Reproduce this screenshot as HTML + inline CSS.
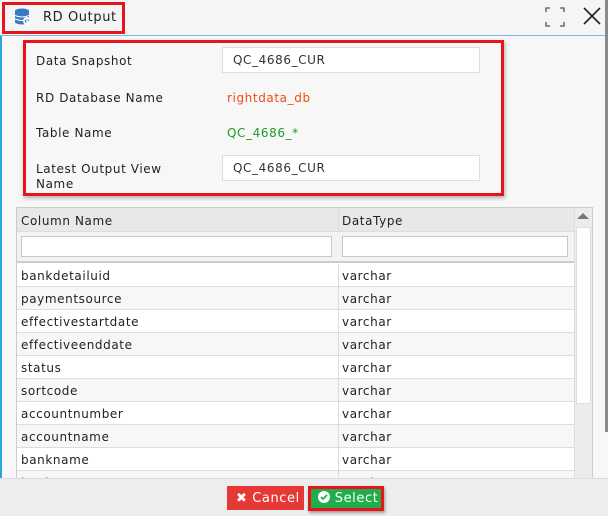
<!DOCTYPE html>
<html><head><style>
*{margin:0;padding:0;box-sizing:border-box}
body{width:608px;height:516px;overflow:hidden;background:#f7f7f7;font-family:"DejaVu Sans","Liberation Sans",sans-serif;font-size:12px;letter-spacing:0.6px;color:#222;position:relative}
.a{position:absolute}
.inp{position:absolute;background:#fff;border:1px solid #ddd;height:26px;padding-left:10px;line-height:25px;color:#333}
.row{position:absolute;left:17px;width:557px;height:23px;border-bottom:1px solid #ddd}
.row span{position:absolute;top:5px}
.row .c1{left:4px}.row .c2{left:325px}
.row:after{content:"";position:absolute;left:321px;top:0;bottom:0;border-left:1px solid #ddd}
</style></head><body>
<div class="a" style="left:0;top:0;width:608px;height:36px;background:#f5f5f5;border-bottom:1px solid #7fb6e0"></div>
<div class="a" style="left:0;top:36px;width:2px;height:442px;background:#2aa6de"></div>
<div class="a" style="left:605px;top:0;width:3px;height:432px;background:#8a8a8a"></div>
<div class="a" style="left:2px;top:2px;width:123px;height:32px;border:3px solid #e8141b"></div>
<svg class="a" style="left:14px;top:8px" width="18" height="18" viewBox="0 0 18 18"><ellipse cx="8" cy="3" rx="7" ry="2.5" fill="#3b78c0"/><rect x="1" y="3" width="14" height="11" fill="#3b78c0"/><ellipse cx="8" cy="14" rx="7" ry="2.5" fill="#3b78c0"/><path d="M1 7.5q7 3 14 0M1 11q7 3 14 0" stroke="#fff" fill="none"/><circle cx="13" cy="13" r="4" fill="#fff"/><path d="M11 13l1.5-1.5M11 13l1.5 1.5M15 13l-1.5-1.5" stroke="#3b78c0" stroke-width="1"/></svg>
<div class="a" style="left:43px;top:10px;font-size:13px">RD Output</div>
<svg class="a" style="left:545px;top:7px" width="20" height="20" viewBox="0 0 20 20" fill="none" stroke="#555" stroke-width="1.3"><path d="M1 5V1h4M15 1h4v4M19 15v4h-4M5 19H1v-4"/></svg>
<svg class="a" style="left:583px;top:7px" width="18" height="18" viewBox="0 0 18 18" stroke="#222" stroke-width="1.6"><path d="M1 1l16 16M17 1L1 17"/></svg>
<div class="a" style="left:23px;top:40px;width:481px;height:156px;border:3px solid #e8141b;box-shadow:1px 2px 4px rgba(0,0,0,.3)"></div>
<div class="a" style="left:36px;top:54px">Data Snapshot</div>
<div class="inp" style="left:222px;top:47px;width:258px">QC_4686_CUR</div>
<div class="a" style="left:36px;top:91px">RD Database Name</div>
<div class="a" style="left:227px;top:91px;color:#f04e13">rightdata_db</div>
<div class="a" style="left:36px;top:126px">Table Name</div>
<div class="a" style="left:227px;top:126px;color:#1e9a28">QC_4686_*</div>
<div class="a" style="left:36px;top:162px;line-height:15px">Latest Output View<br>Name</div>
<div class="inp" style="left:222px;top:155px;width:258px">QC_4686_CUR</div>
<div class="a" style="left:16px;top:207px;width:577px;height:272px;border:1px solid #ccc;background:#fff"></div>
<div class="a" style="left:17px;top:208px;width:557px;height:24px;background:#e8e8e8;border-bottom:1px solid #ddd"></div>
<div class="a" style="left:21px;top:214px">Column Name</div>
<div class="a" style="left:338px;top:208px;height:55px;border-left:1px solid #ddd"></div>
<div class="a" style="left:342px;top:214px">DataType</div>
<div class="a" style="left:17px;top:232px;width:557px;height:31px;background:#f3f3f3;border-bottom:2px solid #ccc"></div>
<div class="a" style="left:21px;top:236px;width:311px;height:21px;background:#fff;border:1px solid #c6c6c6"></div>
<div class="a" style="left:342px;top:236px;width:226px;height:21px;background:#fff;border:1px solid #c6c6c6"></div>
<div class="row" style="top:264px;background:#fff"><span class="c1">bankdetailuid</span><span class="c2">varchar</span></div>
<div class="row" style="top:287px;background:#f7f7f7"><span class="c1">paymentsource</span><span class="c2">varchar</span></div>
<div class="row" style="top:310px;background:#fff"><span class="c1">effectivestartdate</span><span class="c2">varchar</span></div>
<div class="row" style="top:333px;background:#f7f7f7"><span class="c1">effectiveenddate</span><span class="c2">varchar</span></div>
<div class="row" style="top:356px;background:#fff"><span class="c1">status</span><span class="c2">varchar</span></div>
<div class="row" style="top:379px;background:#f7f7f7"><span class="c1">sortcode</span><span class="c2">varchar</span></div>
<div class="row" style="top:402px;background:#fff"><span class="c1">accountnumber</span><span class="c2">varchar</span></div>
<div class="row" style="top:425px;background:#f7f7f7"><span class="c1">accountname</span><span class="c2">varchar</span></div>
<div class="row" style="top:448px;background:#fff"><span class="c1">bankname</span><span class="c2">varchar</span></div>
<div class="row" style="top:471px;background:#f7f7f7"><span class="c1">bankaccounttype</span><span class="c2">varchar</span></div>
<div class="a" style="left:574px;top:208px;width:18px;height:270px;background:#ececec;border-left:1px solid #ddd"></div>
<div class="a" style="left:577px;top:213px;width:0;height:0;border-left:6px solid transparent;border-right:6px solid transparent;border-bottom:6px solid #777"></div>
<div class="a" style="left:576px;top:227px;width:15px;height:177px;background:#fff;border:1px solid #ddd"></div>
<div class="a" style="left:0;top:478px;width:608px;height:38px;background:#ededed;border-top:1px solid #ddd"></div>
<div class="a" style="left:227px;top:486px;width:77px;height:24px;background:#e53935;color:#fff;font-size:13px;line-height:25px;padding-left:9px">✖ Cancel</div>
<div class="a" style="left:308px;top:486px;width:76px;height:25px;border:3px solid #e8141b;background:#1fae4b;color:#fff;font-size:13px;line-height:20px;padding-left:7px;box-shadow:1px 2px 3px rgba(0,0,0,.35)"><svg width="12" height="12" viewBox="0 0 12 12" style="vertical-align:-1px"><circle cx="6" cy="6" r="6" fill="#fff"/><path d="M3 6l2 2 4-4" stroke="#1fae4b" stroke-width="1.8" fill="none"/></svg> Select</div>
</body></html>
